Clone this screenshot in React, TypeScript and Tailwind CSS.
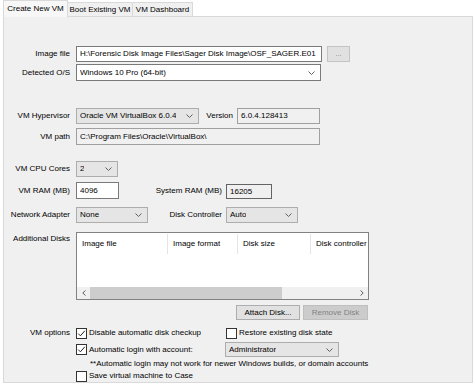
import type { ReactNode } from 'react';

const Chevron = () => (
  <svg width="7" height="4" viewBox="0 0 7 4" className="shrink-0">
    <polyline points="0.5,0.5 3.5,3.5 6.5,0.5" fill="none" stroke="#606060" strokeWidth="1" />
  </svg>
);

function Select({ value, w, white }: { value: string; w: string; white?: boolean }) {
  return (
    <div
      className={`${w} h-full flex items-center justify-between pl-[3px] pr-[5px] border ${
        white ? 'bg-white border-[#7a7a7a]' : 'bg-[#e5e5e5] border-[#adadad]'
      }`}
    >
      <span className="truncate">{value}</span>
      <Chevron />
    </div>
  );
}

function TextBox({ value, w, readOnly }: { value: string; w: string; readOnly?: boolean }) {
  return (
    <div
      className={`${w} h-full flex items-center px-[3px] border ${
        readOnly ? 'bg-[#f0f0f0] border-[#a0a0a0]' : 'bg-white border-[#7a7a7a]'
      }`}
    >
      <span className="truncate">{value}</span>
    </div>
  );
}

function Row({ label, h, mt, children }: { label?: string; h: string; mt: string; children: ReactNode }) {
  return (
    <div className={`flex ${h} ${mt}`}>
      <div className="w-[67px] shrink-0 flex items-center justify-end pr-[1px]">{label}</div>
      <div className="ml-[5px] flex items-center h-full">{children}</div>
    </div>
  );
}

function Check({ checked, label, w }: { checked?: boolean; label: string; w?: string }) {
  return (
    <div className={`flex items-center gap-[2px] ${w ?? ''}`}>
      <div className="w-[11px] h-[11px] bg-white border border-[#333] flex items-center justify-center">
        {checked && (
          <svg width="9" height="9" viewBox="0 0 9 9">
            <polyline points="1.2,4.6 3.4,6.8 7.8,1.8" fill="none" stroke="#222" strokeWidth="1" />
          </svg>
        )}
      </div>
      <span>{label}</span>
    </div>
  );
}

function DiskList() {
  const cols = [
    { name: 'Image file', w: 'w-[91px]' },
    { name: 'Image format', w: 'w-[70px]' },
    { name: 'Disk size', w: 'w-[73px]' },
    { name: 'Disk controller', w: 'flex-1' },
  ];
  return (
    <div className="w-[293px] h-full bg-white border border-[#828282] flex flex-col">
      <div className="flex h-[21px] pt-[1px]">
        {cols.map((c, i) => (
          <div
            key={c.name}
            className={`${c.w} flex items-center pl-[5px] whitespace-nowrap overflow-hidden ${
              i < cols.length - 1 ? 'border-r border-[#e5e5e5]' : ''
            }`}
          >
            {c.name}
          </div>
        ))}
      </div>
      <div className="flex-1" />
      <div className="h-[12px] bg-[#f0f0f0] flex items-center">
        <div className="w-[13px] flex justify-center">
          <svg width="4" height="6" viewBox="0 0 4 6">
            <polyline points="3.5,0.5 0.8,3 3.5,5.5" fill="none" stroke="#606060" strokeWidth="1" />
          </svg>
        </div>
        <div className="w-[192px] h-full bg-[#cdcdcd]" />
        <div className="flex-1" />
        <div className="w-[13px] flex justify-center">
          <svg width="4" height="6" viewBox="0 0 4 6">
            <polyline points="0.5,0.5 3.2,3 0.5,5.5" fill="none" stroke="#606060" strokeWidth="1" />
          </svg>
        </div>
      </div>
    </div>
  );
}

export default function App() {
  return (
    <div
      className="w-[474px] h-[385px] bg-white overflow-hidden text-[8px] text-black leading-none"
      style={{ fontFamily: '"Liberation Sans", Arial, sans-serif' }}
    >
      {/* tabs */}
      <div className="flex items-end h-[17px] pl-[3px] -mb-px relative z-10">
        <div className="w-[65px] h-[17px] bg-[#f7f7f7] border border-b-0 border-[#d9d9d9] flex items-center justify-center">
          Create New VM
        </div>
        <div className="w-[65px] h-[15px] bg-[#f0f0f0] border border-l-0 border-[#d9d9d9] flex items-center justify-center">
          Boot Existing VM
        </div>
        <div className="w-[60px] h-[15px] bg-[#f0f0f0] border border-l-0 border-[#d9d9d9] flex items-center justify-center">
          VM Dashboard
        </div>
      </div>

      {/* panel */}
      <div className="ml-[3px] w-[470px] h-[367px] bg-[#f0f0f0] border border-[#d9d9d9] flex flex-col">
        <Row label="Image file" h="h-[16px]" mt="mt-[29px]">
          <TextBox w="w-[246px]" value="H:\Forensic Disk Image Files\Sager Disk Image\OSF_SAGER.E01" />
          <div className="ml-[5px] w-[23px] h-full bg-[#e1e1e1] border border-[#c4c4c4] flex items-center justify-center text-[#8a8a8a]">
            ...
          </div>
        </Row>

        <Row label="Detected O/S" h="h-[17px]" mt="mt-[2px]">
          <Select w="w-[245px]" value="Windows 10 Pro (64-bit)" white />
        </Row>

        <Row label="VM Hypervisor" h="h-[16px]" mt="mt-[27px]">
          <Select w="w-[123px]" value="Oracle VM VirtualBox 6.0.4" />
          <div className="w-[34px] flex justify-end">Version</div>
          <div className="ml-[4px] h-full">
            <TextBox w="w-[83px]" value="6.0.4.128413" readOnly />
          </div>
        </Row>

        <Row label="VM path" h="h-[17px]" mt="mt-[4px]">
          <TextBox w="w-[244px]" value="C:\Program Files\Oracle\VirtualBox\" readOnly />
        </Row>

        <Row label="VM CPU Cores" h="h-[16px]" mt="mt-[16px]">
          <Select w="w-[42px]" value="2" />
        </Row>

        <Row label="VM RAM (MB)" h="h-[17px]" mt="mt-[5px]">
          <TextBox w="w-[43px]" value="4096" />
          <div className="w-[103px] flex justify-end">System RAM (MB)</div>
          <div className="ml-[4px] h-[15px] mt-[2px]">
            <div className="w-[46px] h-full flex items-center px-[3px] bg-[#f0f0f0] border border-[#646464]">16205</div>
          </div>
        </Row>

        <Row label="Network Adapter" h="h-[16px]" mt="mt-[8px]">
          <Select w="w-[72px]" value="None" />
          <div className="w-[74px] flex justify-end">Disk Controller</div>
          <div className="ml-[4px] h-full">
            <Select w="w-[72px]" value="Auto" />
          </div>
        </Row>

        <div className="flex h-[68px] mt-[9px]">
          <div className="w-[67px] shrink-0 flex justify-end pr-[1px] pt-[3px]">Additional Disks</div>
          <div className="ml-[5px] h-full">
            <DiskList />
          </div>
        </div>

        <div className="flex h-[15px] mt-[5px] pl-[232px] gap-[3px]">
          <div className="w-[64px] h-full bg-[#e1e1e1] border border-[#adadad] flex items-center justify-center">
            Attach Disk...
          </div>
          <div className="w-[65px] h-full bg-[#cccccc] border border-[#bfbfbf] flex items-center justify-center text-[#838383]">
            Remove Disk
          </div>
        </div>

        <Row label="VM options" h="h-[12px]" mt="mt-[7px]">
          <Check w="w-[150px]" checked label="Disable automatic disk checkup" />
          <Check label="Restore existing disk state" />
        </Row>

        <Row label="" h="h-[15px]" mt="mt-[3px]">
          <Check w="w-[149px]" checked label="Automatic login with account:" />
          <div className="h-full">
            <Select w="w-[114px]" value="Administrator" />
          </div>
        </Row>

        <div className="mt-[2px] h-[10px] pl-[86px] flex items-center">
          **Automatic login may not work for newer Windows builds, or domain accounts
        </div>

        <Row label="" h="h-[12px]" mt="mt-[1px]">
          <Check label="Save virtual machine to Case" />
        </Row>
      </div>
    </div>
  );
}
